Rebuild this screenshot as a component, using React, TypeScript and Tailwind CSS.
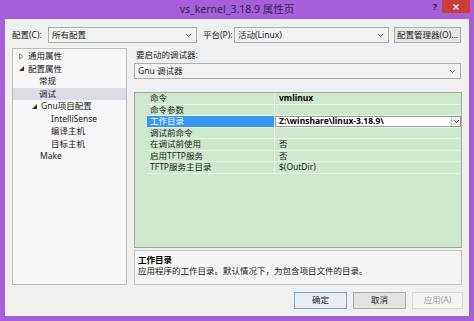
import React from "react";

const FONT = { fontFamily: "'Noto Sans', 'Noto Sans CJK SC', sans-serif" };

const Chevron = () => (
  <svg width="7" height="5" viewBox="0 0 7 5">
    <path d="M1 1l2.5 2.5L6 1" stroke="#555" strokeWidth="1" fill="none" />
  </svg>
);

const Collapsed = () => (
  <svg width="5" height="7" viewBox="0 0 5 7">
    <path d="M0.5 0.8L4 3.5L0.5 6.2Z" stroke="#777" strokeWidth="0.9" fill="none" />
  </svg>
);

const Expanded = () => (
  <svg width="5" height="5" viewBox="0 0 5 5">
    <path d="M5 0L5 5L0 5Z" fill="#333" />
  </svg>
);

function Dropdown({ text, w }: { text: string; w: string }) {
  return (
    <div
      className={`${w} h-[16px] border border-[#adadad] bg-[#f2f2f2] flex items-center justify-between pl-[3px] pr-[4px]`}
    >
      <span className="text-[8.5px] leading-none text-[#222]">{text}</span>
      <Chevron />
    </div>
  );
}

type Row = { name: string; value: string; bold?: boolean; sel?: boolean };

const rows: Row[] = [
  { name: "命令", value: "vmlinux", bold: true },
  { name: "命令参数", value: "" },
  { name: "工作目录", value: "Z:\\winshare\\linux-3.18.9\\", bold: true, sel: true },
  { name: "调试前命令", value: "" },
  { name: "在调试前使用", value: "否" },
  { name: "启用TFTP服务", value: "否" },
  { name: "TFTP服务主目录", value: "$(OutDir)" },
];

type TreeItem = { label: string; indent: string; icon?: "c" | "e"; sel?: boolean };

const tree: TreeItem[] = [
  { label: "通用属性", indent: "pl-[6px]", icon: "c" },
  { label: "配置属性", indent: "pl-[6px]", icon: "e" },
  { label: "常规", indent: "pl-[26px]" },
  { label: "调试", indent: "pl-[26px]", sel: true },
  { label: "Gnu项目配置", indent: "pl-[19px]", icon: "e" },
  { label: "IntelliSense", indent: "pl-[38px]" },
  { label: "编译主机", indent: "pl-[38px]" },
  { label: "目标主机", indent: "pl-[38px]" },
  { label: "Make", indent: "pl-[27px]" },
];

export default function App() {
  return (
    <div className="w-[474px] h-[321px] bg-[#a55fd8] flex flex-col" style={FONT}>
      {/* title bar */}
      <div className="h-[19px] grid grid-cols-[1fr_auto_1fr] items-start">
        <div />
        <div className="text-[10.5px] leading-[19px] text-[#3a2358]">vs_kernel_3.18.9 属性页</div>
        <div className="flex justify-end items-start pr-[4px]">
          <span className="text-[9px] font-bold leading-[13px] text-[#3a2358] mr-[5px]">?</span>
          <div className="w-[28px] h-[13px] bg-[#c9403a] flex items-center justify-center">
            <svg width="6" height="6" viewBox="0 0 6 6">
              <path d="M0.5 0.5L5.5 5.5M5.5 0.5L0.5 5.5" stroke="#fff" strokeWidth="1.2" />
            </svg>
          </div>
        </div>
      </div>

      <div className="flex-1 px-[5px] pb-[5px] flex">
        <div className="flex-1 bg-[#f0f0f0] flex flex-col text-[8.5px] text-[#222]">
          {/* config row */}
          <div className="mt-[8px] h-[16px] flex items-center pl-[7px]">
            <span className="w-[36px] leading-none">配置(C):</span>
            <Dropdown text="所有配置" w="w-[149px]" />
            <span className="ml-[6px] w-[31px] leading-none">平台(P):</span>
            <Dropdown text="活动(Linux)" w="w-[155px]" />
            <div className="ml-[5px] w-[67px] h-[16px] border border-[#adadad] bg-[#e5e5e5] flex items-center justify-center leading-none">
              配置管理器(O)...
            </div>
          </div>

          {/* main */}
          <div className="mt-[5px] flex pl-[7px]">
            {/* tree */}
            <div className="w-[115px] h-[237px] border border-[#bcbcbc] bg-[#f6f6f6] pt-[1px]">
              {tree.map((t) => (
                <div
                  key={t.label}
                  className={`h-[12.5px] flex items-center ${t.indent} ${t.sel ? "bg-[#dcdce5]" : ""}`}
                >
                  {t.icon === "c" && (
                    <span className="w-[9px] flex items-center">
                      <Collapsed />
                    </span>
                  )}
                  {t.icon === "e" && (
                    <span className="w-[9px] flex items-center">
                      <Expanded />
                    </span>
                  )}
                  <span className="leading-none">{t.label}</span>
                </div>
              ))}
            </div>

            {/* right column */}
            <div className="ml-[7px] w-[328px] flex flex-col">
              <div className="h-[15px] flex items-center pl-[2px] leading-none">要启动的调试器:</div>
              <Dropdown text="Gnu 调试器" w="w-[327px]" />
              {/* property grid */}
              <div className="mt-[13px] h-[156px] border border-[#a3a3a3] bg-[#cde8cd] flex">
                <div className="w-[12px]" />
                <div className="flex-1 flex flex-col">
                  {rows.map((r) => (
                    <div key={r.name} className="h-[11.5px] flex border-b border-[#e6f3e6]">
                      <div
                        className={`w-[128px] flex items-center pl-[3px] leading-none border-r border-[#e6f3e6] ${
                          r.sel ? "bg-[#3996f2] text-white" : ""
                        }`}
                      >
                        {r.name}
                      </div>
                      {r.sel ? (
                        <div className="flex-1 bg-white border border-[#9a9a9a] flex items-center justify-between pl-[3px]">
                          <span className="font-bold leading-none text-black">{r.value}</span>
                          <div className="w-[9px] h-full border-l border-[#c0c0c0] bg-[#f2f2f2] flex items-center justify-center">
                            <Chevron />
                          </div>
                        </div>
                      ) : (
                        <div className={`flex-1 flex items-center pl-[4px] leading-none ${r.bold ? "font-bold text-black" : ""}`}>
                          {r.value}
                        </div>
                      )}
                    </div>
                  ))}
                </div>
              </div>
              {/* description */}
              <div className="mt-[2px] h-[35px] border border-[#c6c6c6] bg-[#f4f4f4] pl-[3px] pt-[3px] flex flex-col">
                <div className="font-bold leading-[11px] text-black">工作目录</div>
                <div className="leading-[12px]">应用程序的工作目录。默认情况下，为包含项目文件的目录。</div>
              </div>
            </div>
          </div>

          {/* buttons */}
          <div className="mt-[7px] h-[17px] flex justify-end pr-[6px] gap-[6px]">
            <div className="w-[53px] h-[17px] border border-[#6fa8de] bg-[#e9eef3] flex items-center justify-center leading-none">
              确定
            </div>
            <div className="w-[53px] h-[17px] border border-[#adadad] bg-[#e3e3e3] flex items-center justify-center leading-none">
              取消
            </div>
            <div className="w-[51px] h-[17px] border border-[#d9d9d9] bg-[#f4f4f4] flex items-center justify-center leading-none text-[#a3a3a3]">
              应用(A)
            </div>
          </div>
        </div>
      </div>
    </div>
  );
}
